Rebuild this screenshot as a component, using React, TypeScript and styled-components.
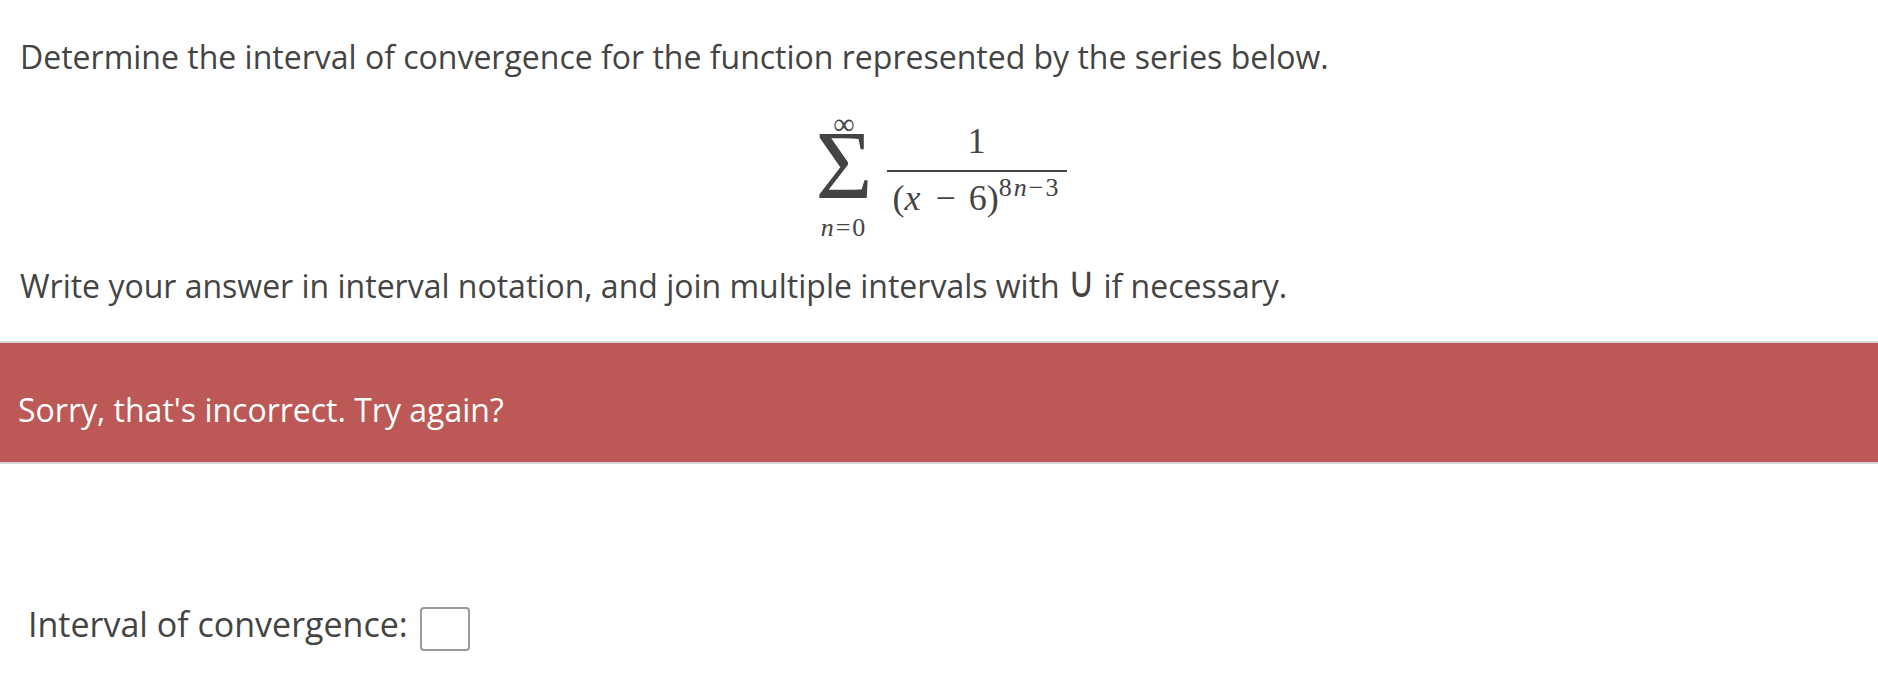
import styled, { createGlobalStyle } from 'styled-components'

const GlobalStyle = createGlobalStyle`
  html, body {
    margin: 0;
    padding: 0;
    background: #ffffff;
  }
  body {
    font-family: "Open Sans", "Liberation Sans", sans-serif;
    color: #444444;
  }
`

const Question = styled.section`
  padding: 35px 20px 0 20px;
`

const Prompt = styled.p`
  margin: 0;
  font-size: 32px;
  line-height: 44px;
  color: #444444;
`

// the union sign, drawn a little taller than the font gives it
const Cup = styled.span`
  display: inline-block;
  font-family: "DejaVu Sans", sans-serif;
  font-size: 37px;
  line-height: 32px;
  transform: scaleY(1.18);
  transform-origin: 50% 100%;
`

const MathBlock = styled.div`
  display: flex;
  justify-content: center;
  align-items: flex-start;
  gap: 14px;
  margin: 32px 0 24px 0;
  padding-left: 4px;
  font-family: "Liberation Serif", "Times New Roman", serif;
  color: #444444;
`

const SumOp = styled.div`
  display: flex;
  flex-direction: column;
  align-items: center;
`

const Infinity = styled.span`
  font-size: 30px;
  line-height: 26px;
`

const Sigma = styled.span`
  font-size: 98px;
  line-height: 56px;
`

const LowerLimit = styled.span`
  margin-top: 23px;
  font-size: 26px;
  line-height: 24px;
  letter-spacing: 2px;
`

const Italic = styled.i`
  font-style: italic;
`

const Fraction = styled.div`
  display: flex;
  flex-direction: column;
  align-items: stretch;
  margin-top: 10px;
`

const Numerator = styled.div`
  text-align: center;
  font-size: 36px;
  line-height: 40px;
  padding-bottom: 9px;
`

const Bar = styled.div`
  height: 2px;
  background: #444444;
`

const Denominator = styled.div`
  margin-top: 5px;
  font-size: 36px;
  line-height: 42px;
  padding: 0 6px 0 6px;
  white-space: nowrap;
`

const Minus = styled.span`
  margin: 0 13px 0 15px;
`

const Sup = styled.sup`
  font-size: 26px;
  vertical-align: 14px;
  line-height: 0;
  letter-spacing: 2px;
`

const Banner = styled.div`
  margin-top: 33px;
  border-top: 2px solid #d6d6d6;
  border-bottom: 2px solid #d6d6d6;
  background: #bc5855;
  padding: 45px 18px 30px 18px;
  color: #ffffff;
  font-size: 32px;
  line-height: 44px;
`

const AnswerRow = styled.div`
  display: flex;
  align-items: flex-start;
  gap: 12px;
  padding: 137px 28px 0 28px;
`

const Label = styled.span`
  font-size: 34px;
  line-height: 46px;
  color: #444444;
`

const AnswerBox = styled.input`
  box-sizing: border-box;
  width: 50px;
  height: 44px;
  margin: 6px 0 0 0;
  border: 2px solid #9a9a9a;
  border-radius: 4px;
  background: #ffffff;
  outline: none;
`

export default function App() {
  return (
    <>
      <GlobalStyle />
      <Question>
        <Prompt>Determine the interval of convergence for the function represented by the series below.</Prompt>
        <MathBlock>
          <SumOp>
            <Infinity>∞</Infinity>
            <Sigma>Σ</Sigma>
            <LowerLimit>
              <Italic>n</Italic>=0
            </LowerLimit>
          </SumOp>
          <Fraction>
            <Numerator>1</Numerator>
            <Bar />
            <Denominator>
              (<Italic>x</Italic>
              <Minus>−</Minus>6)
              <Sup>
                8<Italic>n</Italic>−3
              </Sup>
            </Denominator>
          </Fraction>
        </MathBlock>
        <Prompt>
          Write your answer in interval notation, and join multiple intervals with <Cup>∪</Cup> if necessary.
        </Prompt>
      </Question>
      <Banner>Sorry, that's incorrect. Try again?</Banner>
      <AnswerRow>
        <Label>Interval of convergence:</Label>
        <AnswerBox type="text" aria-label="Interval of convergence" />
      </AnswerRow>
    </>
  )
}
